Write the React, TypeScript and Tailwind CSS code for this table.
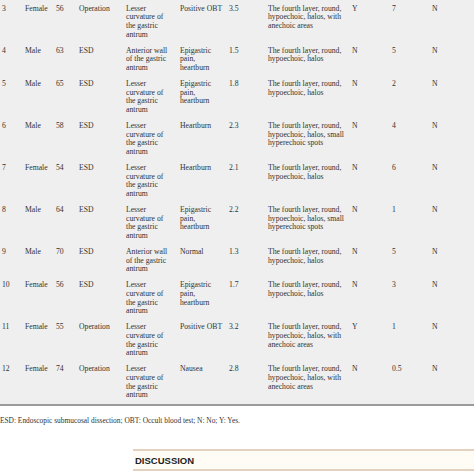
import React from "react";

type Row = string[][];

const rows: Row[] = [
  [["3"], ["Female"], ["56"], ["Operation"], ["Lesser", "curvature of", "the gastric", "antrum"], ["Positive OBT"], ["3.5"], ["The fourth layer, round,", "hypoechoic, halos, with", "anechoic areas"], ["Y"], ["7"], ["N"]],
  [["4"], ["Male"], ["63"], ["ESD"], ["Anterior wall", "of the gastric", "antrum"], ["Epigastric", "pain,", "heartburn"], ["1.5"], ["The fourth layer, round,", "hypoechoic, halos"], ["N"], ["5"], ["N"]],
  [["5"], ["Male"], ["65"], ["ESD"], ["Lesser", "curvature of", "the gastric", "antrum"], ["Epigastric", "pain,", "heartburn"], ["1.8"], ["The fourth layer, round,", "hypoechoic, halos"], ["N"], ["2"], ["N"]],
  [["6"], ["Male"], ["58"], ["ESD"], ["Lesser", "curvature of", "the gastric", "antrum"], ["Heartburn"], ["2.3"], ["The fourth layer, round,", "hypoechoic, halos, small", "hyperechoic spots"], ["N"], ["4"], ["N"]],
  [["7"], ["Female"], ["54"], ["ESD"], ["Lesser", "curvature of", "the gastric", "antrum"], ["Heartburn"], ["2.1"], ["The fourth layer, round,", "hypoechoic, halos"], ["N"], ["6"], ["N"]],
  [["8"], ["Male"], ["64"], ["ESD"], ["Lesser", "curvature of", "the gastric", "antrum"], ["Epigastric", "pain,", "heartburn"], ["2.2"], ["The fourth layer, round,", "hypoechoic, halos, small", "hyperechoic spots"], ["N"], ["1"], ["N"]],
  [["9"], ["Male"], ["70"], ["ESD"], ["Anterior wall", "of the gastric", "antrum"], ["Normal"], ["1.3"], ["The fourth layer, round,", "hypoechoic, halos"], ["N"], ["5"], ["N"]],
  [["10"], ["Female"], ["56"], ["ESD"], ["Lesser", "curvature of", "the gastric", "antrum"], ["Epigastric", "pain,", "heartburn"], ["1.7"], ["The fourth layer, round,", "hypoechoic, halos"], ["N"], ["3"], ["N"]],
  [["11"], ["Female"], ["55"], ["Operation"], ["Lesser", "curvature of", "the gastric", "antrum"], ["Positive OBT"], ["3.2"], ["The fourth layer, round,", "hypoechoic, halos, with", "anechoic areas"], ["Y"], ["1"], ["N"]],
  [["12"], ["Female"], ["74"], ["Operation"], ["Lesser", "curvature of", "the gastric", "antrum"], ["Nausea"], ["2.8"], ["The fourth layer, round,", "hypoechoic, halos, with", "anechoic areas"], ["N"], ["0.5"], ["N"]],
];

export default function App() {
  return (
    <div className="w-[474px] h-[474px] overflow-hidden bg-white" style={{ fontFamily: "'Liberation Serif', 'Times New Roman', serif" }}>
      <div className="bg-[#eeefee] border-b-2 border-[#9b9b9b] pt-[1px] pl-[2px]">
        {rows.map((r, i) => (
          <div key={i} className="grid grid-cols-[23px_31px_23px_47px_54px_49px_39px_84px_40px_40px_42px] py-[3.6px] text-[7.7px] leading-[8.7px] text-[#333333]">
            {r.map((cell, j) => (
              <div key={j} className="whitespace-nowrap">
                {cell.map((line, k) => (
                  <div key={k}>{line}</div>
                ))}
              </div>
            ))}
          </div>
        ))}
      </div>
      <div className="pt-[11px] text-[7.4px] leading-[8.7px] text-[#333333] whitespace-nowrap">
        ESD: Endoscopic submucosal dissection; OBT: Occult blood test; N: No; Y: Yes.
      </div>
      <div className="pl-[133px] pt-[24px]">
        <div className="border-t-2 border-b-2 border-[#e4d2c0] bg-[#fffcf6] h-[22px] flex items-center pl-[2px]">
          <span className="text-[9.5px] font-bold text-[#222] leading-none" style={{ fontFamily: "'Liberation Sans', Arial, sans-serif" }}>DISCUSSION</span>
        </div>
      </div>
    </div>
  );
}
